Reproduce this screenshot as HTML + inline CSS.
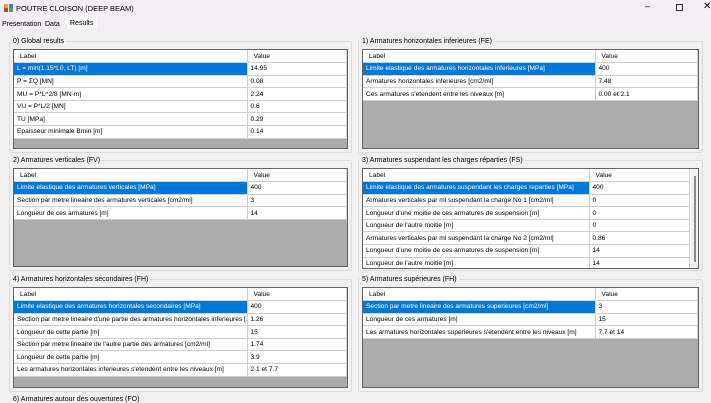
<!DOCTYPE html>
<html><head><meta charset="utf-8"><style>
*{margin:0;padding:0;box-sizing:border-box}
body{width:711px;height:400px;overflow:hidden;background:#f0f0f0;font-family:"Liberation Sans",sans-serif;font-size:7px;color:#000;position:relative}
.tb{position:absolute;left:0;top:0;width:711px;height:17px;background:#f3eff4}
.tabs{position:absolute;left:0;top:17px;width:711px;height:12px;background:#f3eff4}
.a{position:absolute}
.grp{position:absolute;border:1px solid #dcdcdc;border-radius:2px}
.gt{position:absolute;background:#f0f0f0;padding:0 2px;font-size:7px}
.grid{position:absolute;background:#ababab;border:1px solid #646464;overflow:hidden}
.grid table{border-collapse:collapse;width:100%;table-layout:fixed;background:#fff}
.grid td{height:12.6px;border-right:1px solid #d0d0d0;border-bottom:1px solid #d0d0d0;padding:0 0 0 3px;white-space:nowrap;overflow:hidden;font-size:6.6px;line-height:11px}
.grid tr.h td{padding-left:6px}
.sel td:first-child{background:#0078d7;color:#fff}
</style></head><body>
<div class="tb"></div>
<div class="a" style="left:4px;top:4px;width:9px;height:8px"><div class="a" style="left:0;top:0;width:4px;height:4px;background:#e8a33a"></div><div class="a" style="left:5px;top:0;width:4px;height:4px;background:#3c7fd6"></div><div class="a" style="left:0;top:4px;width:4px;height:4px;background:#d23a2e"></div><div class="a" style="left:5px;top:4px;width:4px;height:4px;background:#4aa84a"></div></div>
<div class="a" style="left:16px;top:4px;font-size:7.5px">POUTRE CLOISON (DEEP BEAM)</div>
<div class="a" style="left:645px;top:1px;font-size:9px">–</div>
<div class="a" style="left:676px;top:4px;width:7px;height:7px;border:1px solid #333"></div>
<div class="a" style="left:703px;top:1px;font-size:10px">✕</div>
<div class="tabs"></div>
<div class="a" style="left:67px;top:17px;width:30px;height:12px;background:#f9f9f9"></div>
<div class="a" style="left:2px;top:21px">Presentation</div>
<div class="a" style="left:45px;top:21px">Data</div>
<div class="a" style="left:70px;top:20px">Results</div>

<!-- group 0 -->
<div class="grp" style="left:9px;top:41px;width:343px;height:112px"></div>
<div class="gt" style="left:11px;top:38px">0) Global results</div>
<div class="grid" style="left:13px;top:49px;width:335px;height:100px"><table>
<col style="width:233px"><col>
<tr class="h"><td>Label</td><td>Value</td></tr>
<tr class="sel"><td>L = min(1.15*L0, LT) [m]</td><td>14.95</td></tr>
<tr><td>P = ΣQ [MN]</td><td>0.08</td></tr>
<tr><td>MU = P*L^2/8 [MN·m]</td><td>2.24</td></tr>
<tr><td>VU = P*L/2 [MN]</td><td>0.6</td></tr>
<tr><td>TU [MPa]</td><td>0.29</td></tr>
<tr><td>Epaisseur minimale Bmin [m]</td><td>0.14</td></tr>
</table></div>

<!-- group 1 -->
<div class="grp" style="left:358px;top:41px;width:345px;height:112px"></div>
<div class="gt" style="left:360px;top:38px">1) Armatures horizontales inferieures (FE)</div>
<div class="grid" style="left:362px;top:49px;width:337px;height:100px"><table>
<col style="width:232px"><col>
<tr class="h"><td>Label</td><td>Value</td></tr>
<tr class="sel"><td>Limite elastique des armatures horizontales inferieures [MPa]</td><td>400</td></tr>
<tr><td>Armatures horizontales inferieures [cm2/ml]</td><td>7.48</td></tr>
<tr><td>Ces armatures s'etendent entre les niveaux [m]</td><td>0.00 et 2.1</td></tr>
</table></div>

<!-- group 2 -->
<div class="grp" style="left:9px;top:160px;width:343px;height:111px"></div>
<div class="gt" style="left:11px;top:157px">2) Armatures verticales (FV)</div>
<div class="grid" style="left:13px;top:168px;width:335px;height:99px"><table>
<col style="width:233px"><col>
<tr class="h"><td>Label</td><td>Value</td></tr>
<tr class="sel"><td>Limite elastique des armatures verticales [MPa]</td><td>400</td></tr>
<tr><td>Section par metre lineaire des armatures verticales [cm2/ml]</td><td>3</td></tr>
<tr><td>Longueur de ces armatures [m]</td><td>14</td></tr>
</table></div>

<!-- group 3 -->
<div class="grp" style="left:358px;top:160px;width:345px;height:111px"></div>
<div class="gt" style="left:360px;top:157px">3) Armatures suspendant les charges réparties (FS)</div>
<div class="grid" style="left:362px;top:168px;width:337px;height:101px;background:#fff"><table style="width:327px">
<col style="width:226px"><col>
<tr class="h"><td>Label</td><td>Value</td></tr>
<tr class="sel"><td>Limite elastique des armatures suspendant les charges reparties [MPa]</td><td>400</td></tr>
<tr><td>Armatures verticales par ml suspendant la charge No 1 [cm2/ml]</td><td>0</td></tr>
<tr><td>Longueur d'une moitie de ces armatures de suspension [m]</td><td>0</td></tr>
<tr><td>Longueur de l'autre moitie [m]</td><td>0</td></tr>
<tr><td>Armatures verticales par ml suspendant la charge No 2 [cm2/ml]</td><td>0.86</td></tr>
<tr><td>Longueur d'une moitie de ces armatures de suspension [m]</td><td>14</td></tr>
<tr><td>Longueur de l'autre moitie [m]</td><td>14</td></tr>
</table><div class="a" style="left:328px;top:0;width:8px;height:100px;background:#f0f0f0"></div><div class="a" style="left:331px;top:7px;width:2px;height:86px;background:#888"></div></div>

<!-- group 4 -->
<div class="grp" style="left:9px;top:279px;width:343px;height:113px"></div>
<div class="gt" style="left:11px;top:276px">4) Armatures horizontales secondaires (FH)</div>
<div class="grid" style="left:13px;top:287px;width:335px;height:101px"><table>
<col style="width:233px"><col>
<tr class="h"><td>Label</td><td>Value</td></tr>
<tr class="sel"><td>Limite elastique des armatures horizontales secondaires [MPa]</td><td>400</td></tr>
<tr><td>Section par metre lineaire d'une partie des armatures horizontales inferieures [...</td><td>1.26</td></tr>
<tr><td>Longueur de cette partie [m]</td><td>15</td></tr>
<tr><td>Section par metre lineaire de l'autre partie des armatures [cm2/ml]</td><td>1.74</td></tr>
<tr><td>Longueur de cette partie [m]</td><td>3.9</td></tr>
<tr><td>Les armatures horizontales inferieures s'etendent entre les niveaux [m]</td><td>2.1 et 7.7</td></tr>
</table></div>

<!-- group 5 -->
<div class="grp" style="left:358px;top:279px;width:345px;height:113px"></div>
<div class="gt" style="left:360px;top:276px">5) Armatures supérieures (FH)</div>
<div class="grid" style="left:362px;top:287px;width:337px;height:101px"><table>
<col style="width:232px"><col>
<tr class="h"><td>Label</td><td>Value</td></tr>
<tr class="sel"><td>Section par metre lineaire des armatures superieures [cm2/ml]</td><td>3</td></tr>
<tr><td>Longueur de ces armatures [m]</td><td>15</td></tr>
<tr><td>Les armatures horizontales superieures s'etendent entre les niveaux [m]</td><td>7.7 et 14</td></tr>
</table></div>

<div class="gt" style="left:11px;top:396px">6) Armatures autour des ouvertures (FO)</div>
</body></html>
